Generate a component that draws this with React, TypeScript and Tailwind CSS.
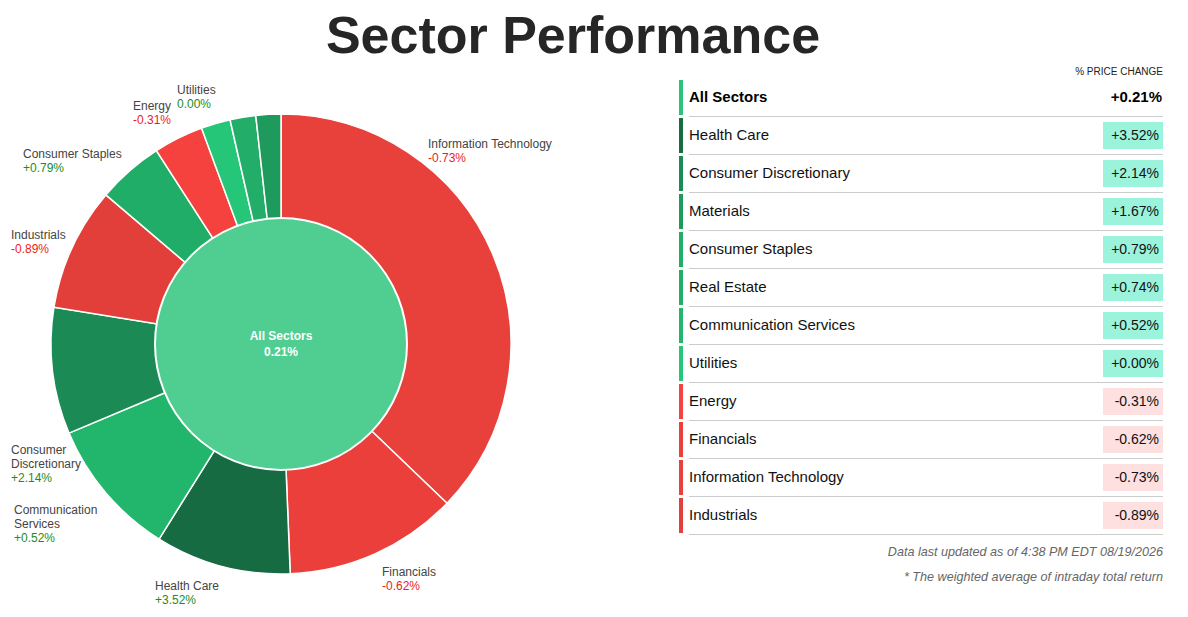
import React from "react";

interface Slice {
  name: string;
  start: number;
  end: number;
  color: string;
}

interface Row {
  name: string;
  value: string;
  bar: string;
  up: boolean;
}

const TOP = 65; // page y where the chart svg begins
const CX = 281;
const CY = 344 - TOP;
const R_OUT = 230;
const R_IN = 126;

const slices: Slice[] = [
  { name: "Information Technology", start: 0, end: 133.8, color: "#e8403b" },
  { name: "Financials", start: 133.8, end: 177.7, color: "#ea3f3b" },
  { name: "Health Care", start: 177.7, end: 212, color: "#166b43" },
  { name: "Communication Services", start: 212, end: 247.2, color: "#22b66c" },
  { name: "Consumer Discretionary", start: 247.2, end: 279.2, color: "#1b8a55" },
  { name: "Industrials", start: 279.2, end: 310.4, color: "#e33f3a" },
  { name: "Consumer Staples", start: 310.4, end: 327.2, color: "#20ad68" },
  { name: "Energy", start: 327.2, end: 339.8, color: "#f5423e" },
  { name: "Utilities", start: 339.8, end: 347.2, color: "#26c679" },
  { name: "Real Estate", start: 347.2, end: 353.7, color: "#22ae69" },
  { name: "Materials", start: 353.7, end: 360, color: "#1e9a5c" },
];

// label lines: [x, centerY (page), text, kind]
type Kind = "name" | "up" | "down";
const labels: [number, number, string, Kind][] = [
  [428, 143, "Information Technology", "name"],
  [428, 157, "-0.73%", "down"],
  [177, 89, "Utilities", "name"],
  [177, 103, "0.00%", "up"],
  [133, 105, "Energy", "name"],
  [133, 119, "-0.31%", "down"],
  [23, 153, "Consumer Staples", "name"],
  [23, 167, "+0.79%", "up"],
  [11, 234, "Industrials", "name"],
  [11, 248, "-0.89%", "down"],
  [11, 449, "Consumer", "name"],
  [11, 463, "Discretionary", "name"],
  [11, 477, "+2.14%", "up"],
  [14, 509, "Communication", "name"],
  [14, 523, "Services", "name"],
  [14, 537, "+0.52%", "up"],
  [155, 585, "Health Care", "name"],
  [155, 599, "+3.52%", "up"],
  [382, 571, "Financials", "name"],
  [382, 585, "-0.62%", "down"],
];

const rows: Row[] = [
  { name: "Health Care", value: "+3.52%", bar: "bg-[#166b43]", up: true },
  { name: "Consumer Discretionary", value: "+2.14%", bar: "bg-[#1b8a55]", up: true },
  { name: "Materials", value: "+1.67%", bar: "bg-[#1e9a5c]", up: true },
  { name: "Consumer Staples", value: "+0.79%", bar: "bg-[#20ad68]", up: true },
  { name: "Real Estate", value: "+0.74%", bar: "bg-[#22ae69]", up: true },
  { name: "Communication Services", value: "+0.52%", bar: "bg-[#22b66c]", up: true },
  { name: "Utilities", value: "+0.00%", bar: "bg-[#26c679]", up: true },
  { name: "Energy", value: "-0.31%", bar: "bg-[#f5423e]", up: false },
  { name: "Financials", value: "-0.62%", bar: "bg-[#ea3f3b]", up: false },
  { name: "Information Technology", value: "-0.73%", bar: "bg-[#e8403b]", up: false },
  { name: "Industrials", value: "-0.89%", bar: "bg-[#e33f3a]", up: false },
];

function pt(r: number, deg: number) {
  const a = (deg * Math.PI) / 180;
  return [CX + r * Math.sin(a), CY - r * Math.cos(a)];
}

function arcPath(s: Slice) {
  const rIn = R_IN - 4;
  const [x1, y1] = pt(R_OUT, s.start);
  const [x2, y2] = pt(R_OUT, s.end);
  const [x3, y3] = pt(rIn, s.end);
  const [x4, y4] = pt(rIn, s.start);
  const large = s.end - s.start > 180 ? 1 : 0;
  return `M${x1} ${y1} A${R_OUT} ${R_OUT} 0 ${large} 1 ${x2} ${y2} L${x3} ${y3} A${rIn} ${rIn} 0 ${large} 0 ${x4} ${y4} Z`;
}

function Donut() {
  return (
    <svg width={600} height={552} className="block" style={{ fontFamily: '"Liberation Sans", Arial, sans-serif' }}>
      {slices.map((s) => (
        <path key={s.name} d={arcPath(s)} fill={s.color} stroke="#fff" strokeWidth={1.5} />
      ))}
      <circle cx={CX} cy={CY} r={R_IN} fill="#50cd90" stroke="#fff" strokeWidth={2} />
      <text x={CX} y={336 - TOP} textAnchor="middle" dominantBaseline="central" fill="#fff" fontSize={12} fontWeight="bold">
        All Sectors
      </text>
      <text x={CX} y={352 - TOP} textAnchor="middle" dominantBaseline="central" fill="#fff" fontSize={12} fontWeight="bold">
        0.21%
      </text>
      {labels.map(([x, y, t, k], i) => (
        <text
          key={i}
          x={x}
          y={y - TOP + 1}
          dominantBaseline="central"
          fontSize={12}
          fill={k === "name" ? "#444" : k === "up" ? "#1e8c1e" : "#ee1c1c"}
        >
          {t}
        </text>
      ))}
    </svg>
  );
}

export default function App() {
  return (
    <div className="w-[1188px] h-[617px] bg-white overflow-hidden font-['Liberation_Sans',Arial,sans-serif]">
      <div className="pr-[42px] pt-[6px] h-[65px] text-center text-[52px] leading-[58px] font-bold text-[#262626]">
        Sector Performance
      </div>

      <div className="flex">
        <div className="w-[679px]">
          <Donut />
        </div>

        <div className="w-[484px]">
          <div className="h-[14px] text-right text-[10px] leading-[14px] text-[#222]">% PRICE CHANGE</div>

          {/* All sectors summary */}
          <div className="flex h-[38px]">
            <div className="w-[4px] h-[35px] mt-[1px] bg-[#2cc27c]" />
            <div className="ml-[6px] flex-1 h-[38px] border-b border-[#cccccc] flex items-center justify-between">
              <span className="text-[15px] font-bold text-black">All Sectors</span>
              <span className="text-[15px] font-bold text-black pr-[1px]">+0.21%</span>
            </div>
          </div>

          {rows.map((r) => (
            <div key={r.name} className="flex h-[38px]">
              <div className={`w-[4px] h-[35px] mt-[1px] ${r.bar}`} />
              <div className="ml-[6px] flex-1 h-[38px] border-b border-[#cccccc] flex items-center justify-between">
                <span className="text-[15px] text-[#111]">{r.name}</span>
                <span
                  className={`w-[60px] h-[27px] mb-[1px] pr-[4px] flex items-center justify-end text-[14px] text-[#111] ${
                    r.up ? "bg-[#9cf3dc]" : "bg-[#fde0df]"
                  }`}
                >
                  {r.value}
                </span>
              </div>
            </div>
          ))}

          <div className="mt-[9px] text-right text-[12.6px] leading-[16px] italic text-[#666]">
            Data last updated as of 4:38 PM EDT 08/19/2026
          </div>
          <div className="mt-[9px] text-right text-[12.6px] leading-[16px] italic text-[#666]">
            * The weighted average of intraday total return
          </div>
        </div>
      </div>
    </div>
  );
}
